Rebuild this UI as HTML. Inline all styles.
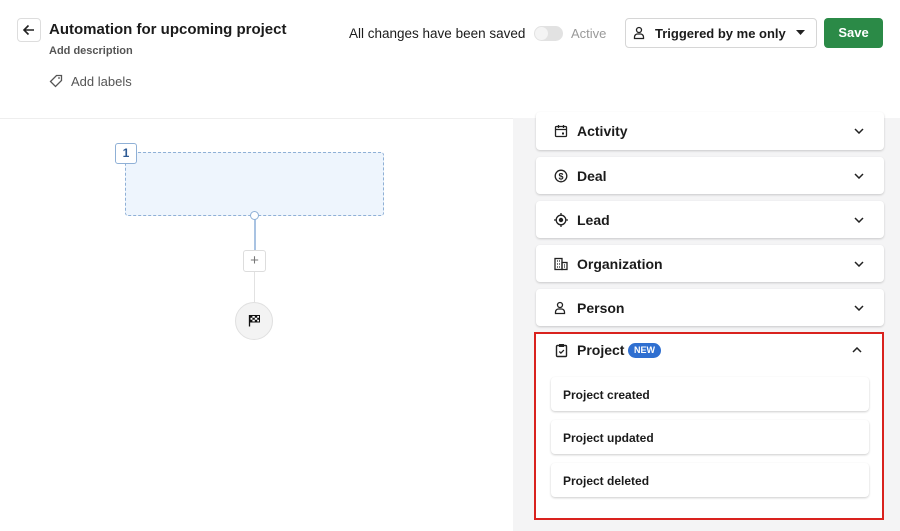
<!DOCTYPE html>
<html><head><meta charset="utf-8"><style>
*{box-sizing:border-box;margin:0;padding:0}
body{width:900px;height:531px;overflow:hidden;background:#fff;font-family:"Liberation Sans",Arial,sans-serif;color:#1b1b1b;position:relative}
.a{position:absolute}
.panel{left:513px;top:118px;width:387px;height:413px;background:#f4f4f5}
.card{position:absolute;left:536px;width:348px;background:#fff;border-radius:4px;box-shadow:0 1px 2px rgba(0,0,0,.18);font-weight:bold;font-size:14px}
.card .t{position:absolute;left:41px;top:50%;transform:translateY(-50%)}
.card svg.i{position:absolute;left:18px;top:50%;transform:translateY(-50%)}
.card svg.c{position:absolute;right:20px;top:50%;transform:translateY(-50%)}
.item{position:absolute;left:551px;width:318px;height:34px;background:#fff;border-radius:4px;box-shadow:0 1px 2px rgba(0,0,0,.2);font-weight:bold;font-size:12px;padding:11px 0 0 12px}
</style></head><body>
<div class="a" style="left:17px;top:18px;width:24px;height:24px;border:1px solid #ddd;border-radius:4px"></div>
<svg class="a" style="left:22px;top:23px" width="14" height="14" viewBox="0 0 14 14"><path d="M12 7H2M6.5 2.5L2 7l4.5 4.5" stroke="#222" stroke-width="1.6" fill="none"/></svg>
<div class="a" style="left:49px;top:21px;font-size:15px;font-weight:bold">Automation for upcoming project</div>
<div class="a" style="left:49px;top:45px;font-size:11px;font-weight:bold;color:#555">Add description</div>
<svg class="a" style="left:49px;top:74px" width="14" height="14" viewBox="0 0 14 14"><path d="M7.5 1.5h5v5l-6 6-5-5z" stroke="#555" stroke-width="1.3" fill="none"/><circle cx="10" cy="4" r="0.9" fill="#555"/></svg>
<div class="a" style="left:71px;top:74px;font-size:13px;color:#555">Add labels</div>
<div class="a" style="left:349px;top:26px;font-size:13.5px">All changes have been saved</div>
<div class="a" style="left:534px;top:26px;width:29px;height:15px;border-radius:8px;background:#e2e2e2"><div style="width:13px;height:13px;margin:1px;border-radius:50%;background:#f4f4f4"></div></div>
<div class="a" style="left:571px;top:26px;font-size:13px;color:#999">Active</div>
<div class="a" style="left:625px;top:18px;width:192px;height:30px;border:1px solid #d6d6d6;border-radius:4px"></div>
<svg class="a" style="left:633px;top:26px" width="12" height="14" viewBox="0 0 12 14"><circle cx="6" cy="4" r="2.5" stroke="#222" stroke-width="1.3" fill="none"/><path d="M1.5 12.5v-1.5a3 3 0 0 1 3-3h3a3 3 0 0 1 3 3v1.5z" stroke="#222" stroke-width="1.3" fill="none"/></svg>
<div class="a" style="left:655px;top:26px;font-size:13px;font-weight:bold">Triggered by me only</div>
<svg class="a" style="left:796px;top:30px" width="9" height="6"><path d="M0 0h9L4.5 5z" fill="#222"/></svg>
<div class="a" style="left:824px;top:18px;width:59px;height:30px;background:#2b8a47;border-radius:4px;color:#fff;font-size:13px;font-weight:bold;text-align:center;line-height:30px">Save</div>
<div class="a" style="left:0;top:118px;width:900px;height:1px;background:#eee"></div>
<div class="a panel"></div>

<div class="a" style="left:125px;top:152px;width:259px;height:64px;background:#eef5fd;border:1px dashed #8fb0d6;border-radius:3px"></div>
<div class="a" style="left:115px;top:143px;width:22px;height:21px;background:#fff;border:1px solid #8fb0d6;border-radius:3px;font-size:12px;font-weight:bold;color:#2d5a94;text-align:center;line-height:19px">1</div>
<div class="a" style="left:254px;top:218px;width:1.5px;height:32px;background:#a9c3e2"></div>
<div class="a" style="left:250px;top:211px;width:9px;height:9px;border:1px solid #8fb0d6;border-radius:50%;background:#fff"></div>
<div class="a" style="left:243px;top:250px;width:23px;height:22px;border:1px solid #ddd;border-radius:3px;background:#fff;color:#777;text-align:center;line-height:20px;font-size:15px">+</div>
<div class="a" style="left:254px;top:272px;width:1px;height:30px;background:#e2e2e2"></div>
<div class="a" style="left:235px;top:302px;width:38px;height:38px;border:1px solid #e0e0e0;border-radius:50%;background:#f3f3f3"></div>
<svg class="a" style="left:248px;top:314px" width="13" height="13" viewBox="0 0 13 13"><path d="M1.5 1v11.5" stroke="#111" stroke-width="1.3"/><rect x="2" y="1.5" width="9.5" height="6.5" stroke="#111" stroke-width="1" fill="#fff"/><path d="M2 1.5h2.4v2.2H2zM6.8 1.5h2.4v2.2H6.8zM4.4 3.7h2.4v2.1H4.4zM9.2 3.7h2.3v2.1H9.2zM2 5.8h2.4V8H2zM6.8 5.8h2.4V8H6.8z" fill="#111"/></svg>

<div class="card" style="top:112px;height:38px"><svg class="i" width="14" height="14" viewBox="0 0 14 14"><rect x="1.5" y="2.5" width="11" height="10" rx="1" stroke="#222" stroke-width="1.3" fill="none"/><path d="M1.5 5.5h11M4.5 1v3M9.5 1v3" stroke="#222" stroke-width="1.3"/><rect x="8" y="8.5" width="2" height="2" fill="#222"/></svg><span class="t">Activity</span><svg class="c" width="10" height="6"><path d="M1 1l4 4 4-4" stroke="#222" stroke-width="1.5" fill="none"/></svg></div>
<div class="card" style="top:157px;height:37px"><svg class="i" width="14" height="14" viewBox="0 0 14 14"><circle cx="7" cy="7" r="5.8" stroke="#222" stroke-width="1.3" fill="none"/><text x="7" y="10.3" font-size="9" font-weight="bold" text-anchor="middle" fill="#222" font-family="Liberation Sans">$</text></svg><span class="t">Deal</span><svg class="c" width="10" height="6"><path d="M1 1l4 4 4-4" stroke="#222" stroke-width="1.5" fill="none"/></svg></div>
<div class="card" style="top:201px;height:37px"><svg class="i" width="14" height="14" viewBox="0 0 14 14"><circle cx="7" cy="7" r="4.8" stroke="#222" stroke-width="1.3" fill="none"/><circle cx="7" cy="7" r="2.2" fill="#222"/><path d="M0 7h2M12 7h2M7 0v2M7 12v2" stroke="#222" stroke-width="1.3"/></svg><span class="t">Lead</span><svg class="c" width="10" height="6"><path d="M1 1l4 4 4-4" stroke="#222" stroke-width="1.5" fill="none"/></svg></div>
<div class="card" style="top:245px;height:37px"><svg class="i" width="14" height="14" viewBox="0 0 14 14"><rect x="1" y="1.5" width="7" height="11" stroke="#222" stroke-width="1.3" fill="none"/><rect x="8" y="5.5" width="5" height="7" stroke="#222" stroke-width="1.3" fill="none"/><path d="M3 4h1M5 4h1M3 7h1M5 7h1M3 10h1M5 10h1M10 8h1M10 10h1" stroke="#222" stroke-width="1.2"/></svg><span class="t">Organization</span><svg class="c" width="10" height="6"><path d="M1 1l4 4 4-4" stroke="#222" stroke-width="1.5" fill="none"/></svg></div>
<div class="card" style="top:289px;height:37px"><svg class="i" width="12" height="14" viewBox="0 0 12 14"><circle cx="6" cy="4" r="2.5" stroke="#222" stroke-width="1.3" fill="none"/><path d="M1.5 12.5v-1.5a3 3 0 0 1 3-3h3a3 3 0 0 1 3 3v1.5z" stroke="#222" stroke-width="1.3" fill="none"/></svg><span class="t">Person</span><svg class="c" width="10" height="6"><path d="M1 1l4 4 4-4" stroke="#222" stroke-width="1.5" fill="none"/></svg></div>

<div class="a" style="left:534px;top:332px;width:350px;height:188px;background:#fff;border:2px solid #d9221e"></div>
<svg class="a" style="left:555px;top:343px" width="13" height="15" viewBox="0 0 13 15"><rect x="1.5" y="2.5" width="10" height="11" rx="1" stroke="#222" stroke-width="1.4" fill="none"/><rect x="4" y="1" width="5" height="3" fill="#222"/><path d="M4.3 8.5l1.6 1.6 3-3" stroke="#222" stroke-width="1.3" fill="none"/></svg>
<div class="a" style="left:577px;top:342px;font-size:14px;font-weight:bold">Project</div>
<div class="a" style="left:628px;top:343px;width:33px;height:15px;border-radius:8px;background:#2f6fd0;color:#fff;font-size:9px;font-weight:bold;text-align:center;line-height:15px">NEW</div>
<svg class="a" style="left:852px;top:347px" width="10" height="6"><path d="M1 5l4-4 4 4" stroke="#222" stroke-width="1.5" fill="none"/></svg>
<div class="item" style="top:377px">Project created</div>
<div class="item" style="top:420px">Project updated</div>
<div class="item" style="top:463px">Project deleted</div>
</body></html>
